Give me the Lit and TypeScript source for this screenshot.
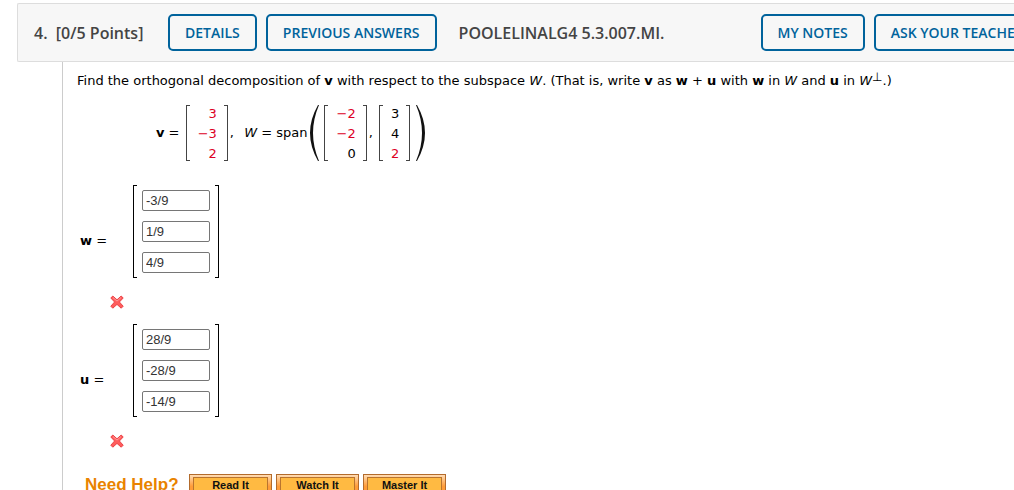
import { LitElement, html, css } from "lit";
import { customElement, property } from "lit/decorators.js";

interface Entry {
  text: string;
  random?: boolean;
}

@customElement("math-matrix")
class MathMatrix extends LitElement {
  @property({ attribute: false }) entries: Entry[] = [];

  static styles = css`
    :host {
      display: inline-flex;
    }
    .bracket {
      box-sizing: border-box;
      width: 4px;
      border: 1px solid #444;
      border-right: 0;
    }
    .bracket.right {
      border-left: 0;
      border-right: 1px solid #444;
    }
    .column {
      display: grid;
      grid-auto-rows: 20px;
      line-height: 20px;
      text-align: right;
      padding: 0 7px 0 8px;
      margin: -1px 0 -3px;
    }
    .random {
      color: #dd0024;
    }
  `;

  render() {
    return html`<span class="bracket"></span>
      <span class="column"
        >${this.entries.map(
          (e) => html`<span class=${e.random ? "random" : ""}>${e.text}</span>`
        )}</span
      >
      <span class="bracket right"></span>`;
  }
}

@customElement("answer-vector")
class AnswerVector extends LitElement {
  @property() name = "";
  @property({ attribute: false }) values: string[] = [];

  static styles = css`
    :host {
      display: block;
    }
    .row {
      display: flex;
      align-items: center;
    }
    .name {
      width: 53px;
      padding-top: 18px;
    }
    .vector {
      display: flex;
    }
    .bracket {
      width: 3px;
      border: 1px solid #000;
      border-right: 0;
    }
    .bracket.right {
      border-left: 0;
      border-right: 1px solid #000;
    }
    .cells {
      display: grid;
      gap: 10px;
      padding: 5px;
    }
    .cell {
      box-sizing: border-box;
      display: block;
      width: 68px;
      height: 21px;
      margin: 0;
      padding: 1px 3px;
      border: 1px solid #767676;
      border-radius: 2px;
      background: #fff;
      color: #333;
      font: 13px "Liberation Sans", Arial, sans-serif;
    }
    .mark {
      display: block;
      width: 14px;
      height: 14px;
      margin: 17px 0 0 30px;
    }
  `;

  render() {
    return html`<div class="row">
        <span class="name"><b>${this.name}</b> =</span>
        <div class="vector">
          <span class="bracket"></span>
          <div class="cells">
            ${this.values.map(
              (v, i) =>
                html`<input
                  class="cell"
                  type="text"
                  aria-label="${this.name} entry ${i + 1}"
                  .value=${v}
                />`
            )}
          </div>
          <span class="bracket right"></span>
        </div>
      </div>
      <svg class="mark" viewBox="0 0 14 14" role="img" aria-label="Incorrect">
        <path
          d="M2.8 1 L7 4.8 L11.2 1 L13.2 3 L9.4 7 L13.2 11.2 L11.2 13.2 L7 9.4 L2.8 13.2 L0.8 11.2 L4.6 7 L0.8 3 Z"
          fill="#ff5c5c"
          stroke="#ea4347"
          stroke-width="1"
          stroke-linejoin="round"
        />
        <path d="M3 2.6 L7 6.1 L11 2.6" fill="none" stroke="#ff9a9a" stroke-width="1" />
      </svg>`;
  }
}

@customElement("app-root")
class AppRoot extends LitElement {
  static styles = css`
    :host {
      display: block;
      box-sizing: border-box;
      height: 100vh;
      overflow: hidden;
      padding: 3px 0 0 17px;
      background: #fff;
      color: #000;
      font: 13px/20px Verdana, "DejaVu Sans", sans-serif;
    }
    .header {
      display: flex;
      align-items: center;
      gap: 9px;
      padding: 10px 16px;
      border: 1px solid #ddd;
      border-right: 0;
      border-radius: 2px 0 0 2px;
      background: #f7f7f7;
      color: #444;
      font: 600 16px/22px "Open Sans", sans-serif;
      white-space: nowrap;
    }
    .points {
      flex: none;
      min-width: 125px;
    }
    .title {
      flex: 1 0 auto;
      min-width: 306px;
      padding-left: 13px;
      box-sizing: border-box;
    }
    .action {
      flex: none;
      height: 37px;
      padding: 0 15px;
      border: 2px solid #00639c;
      border-radius: 5px;
      background: #f7f7f7;
      color: #00639c;
      font: 600 14px/20px "Open Sans", sans-serif;
    }
    .body {
      margin-left: 45px;
      padding: 9px 0 0 14px;
      border-left: 1px solid #ccc;
      min-height: 100%;
    }
    .prompt {
      margin: 0;
      white-space: nowrap;
    }
    .perp {
      font-size: 12px;
      line-height: 0;
      vertical-align: 4px;
    }
    .equation {
      display: flex;
      align-items: center;
      gap: 2px;
      height: 56px;
      margin: 14px 0 24px 79px;
      white-space: pre;
    }
    .paren {
      width: 10px;
      height: 56px;
      margin-right: 3px;
      fill: #111;
    }
    .paren.close {
      margin: 0 0 0 4px;
    }
    .answers {
      display: grid;
      gap: 15px;
      padding-left: 3px;
    }
    .help {
      display: flex;
      align-items: flex-start;
      gap: 4px;
      margin: 26px 0 0 8px;
    }
    .help-label {
      width: 100px;
      color: #e98300;
      font: bold 17px/22px "Liberation Sans", Arial, sans-serif;
    }
    .help-button {
      box-sizing: border-box;
      width: 83px;
      height: 21px;
      padding: 0;
      border: 1px solid #b36b2c;
      background: linear-gradient(#ffdcb4, #ff9c38 60%);
    }
    .help-face {
      display: block;
      height: 15px;
      margin: 2px 3px;
      box-sizing: border-box;
      border: 1px solid #b9742f;
      background: #ffba42;
      color: #111;
      font: bold 11px/14px "Liberation Sans", Arial, sans-serif;
    }
  `;

  render() {
    const v = [
      { text: "3", random: true },
      { text: "−3", random: true },
      { text: "2", random: true },
    ];
    const a = [
      { text: "−2", random: true },
      { text: "−2", random: true },
      { text: "0" },
    ];
    const b = [{ text: "3" }, { text: "4" }, { text: "2", random: true }];
    return html`
      <header class="header">
        <span class="points">4.&nbsp; [0/5 Points]</span>
        <button class="action">DETAILS</button>
        <button class="action">PREVIOUS ANSWERS</button>
        <span class="title">POOLELINALG4 5.3.007.MI.</span>
        <button class="action">MY NOTES</button>
        <button class="action">ASK YOUR TEACHER</button>
      </header>
      <main class="body">
        <p class="prompt">
          Find the orthogonal decomposition of <b>v</b> with respect to the
          subspace <i>W</i>. (That is, write <b>v</b> as <b>w</b> + <b>u</b>
          with <b>w</b> in <i>W</i> and <b>u</b> in
          <i>W</i><span class="perp">⊥</span>.)
        </p>
        <div class="equation"
          ><span><b>v</b> = </span><math-matrix .entries=${v}></math-matrix
          ><span>, </span><span> <i>W</i> = span</span
          ><svg class="paren" viewBox="0 0 10 56">
            <path d="M9 0 Q-7 28 9 56 L10 56 Q-2 28 10 0 Z" /></svg
          ><math-matrix .entries=${a}></math-matrix><span>, </span
          ><math-matrix .entries=${b}></math-matrix
          ><svg class="paren close" viewBox="0 0 10 56">
            <path d="M1 0 Q17 28 1 56 L0 56 Q12 28 0 0 Z" /></svg
        ></div>
        <div class="answers">
          <answer-vector name="w" .values=${["-3/9", "1/9", "4/9"]}></answer-vector>
          <answer-vector name="u" .values=${["28/9", "-28/9", "-14/9"]}></answer-vector>
        </div>
        <div class="help">
          <span class="help-label">Need Help?</span>
          ${["Read It", "Watch It", "Master It"].map(
            (t) =>
              html`<button class="help-button">
                <span class="help-face">${t}</span>
              </button>`
          )}
        </div>
      </main>
    `;
  }
}
